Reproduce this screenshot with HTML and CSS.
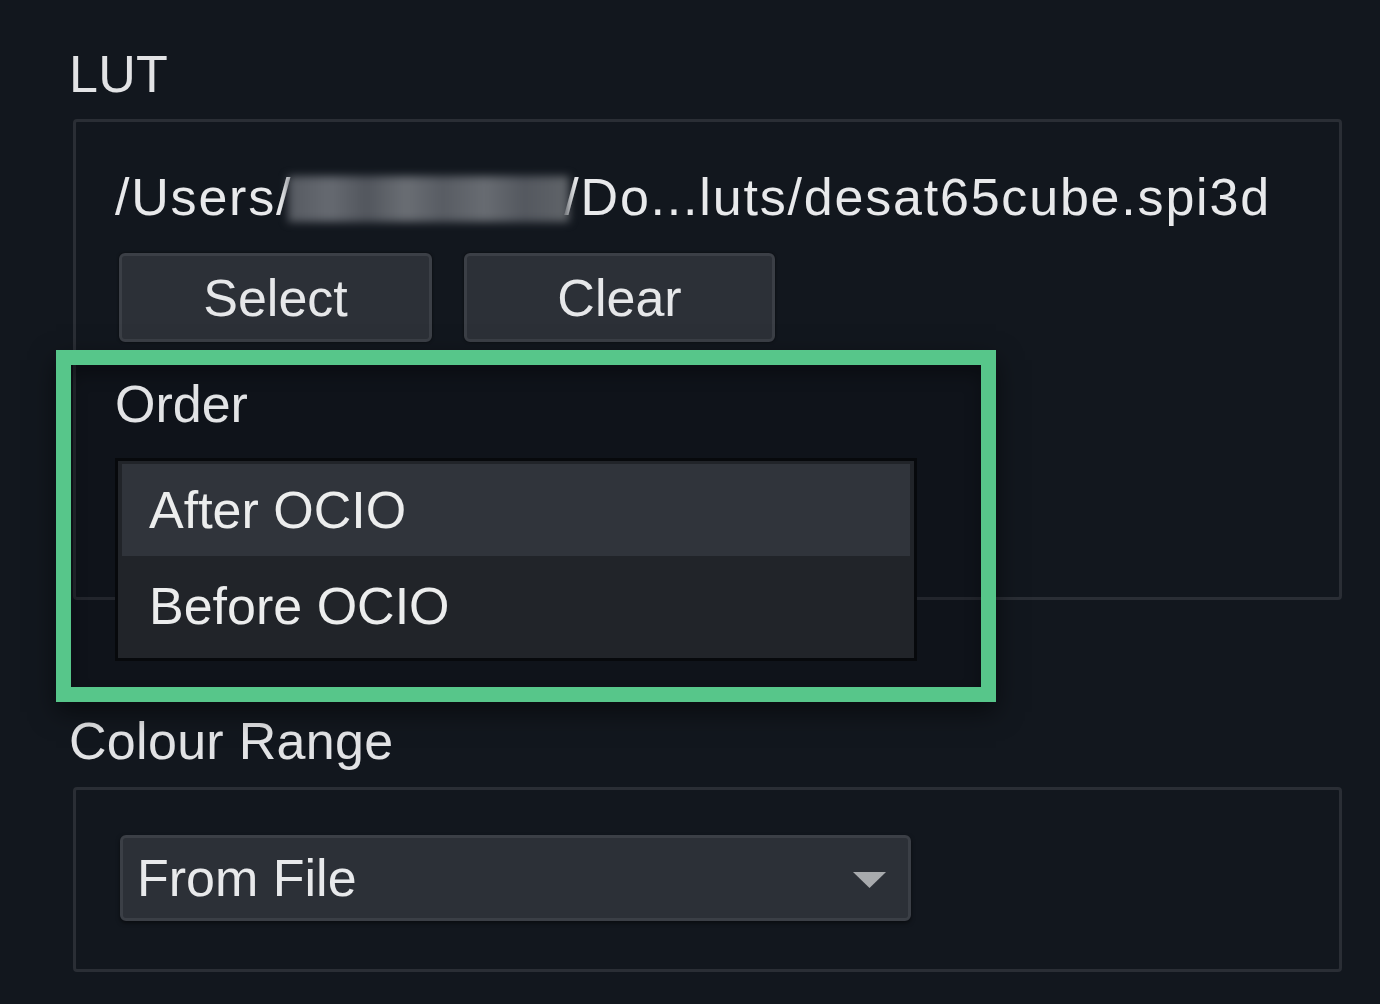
FILE: index.html
```html
<!DOCTYPE html>
<html lang="en">
<head>
<meta charset="utf-8">
<title>LUT settings</title>
<link rel="stylesheet" href="styles.css">
</head>
<body>
<div class="page">
  <div class="label">LUT</div>
  <div class="panel lut-panel">
    <div class="path">/Users/<span class="redacted"></span>/Do...luts/desat65cube.spi3d</div>
    <div class="buttons">
      <button class="btn btn-select">Select</button>
      <button class="btn btn-clear">Clear</button>
    </div>
  </div>

  <div class="label label-range">Colour Range</div>
  <div class="panel range-panel">
    <div class="combo">
      <span class="combo-text">From File</span>
      <svg class="combo-arrow" width="33" height="16" viewBox="0 0 33 16"><polygon points="0,0 33,0 16.5,16" fill="#a8aaad"/></svg>
    </div>
  </div>

  <div class="popup">
    <div class="popup-label">Order</div>
    <div class="list">
      <div class="item item-active">After OCIO</div>
      <div class="item item-second">Before OCIO</div>
    </div>
  </div>
</div>
</body>
</html>
```
FILE: styles.css
```css
html, body {
  margin: 0;
  padding: 0;
  background: #12171e;
}

body {
  font-family: "Liberation Sans", Arial, sans-serif;
  color: #e6e7e9;
  width: 1380px;
  height: 1004px;
  overflow: hidden;
}

.page {
  position: relative;
  padding: 44px 38px 0 66px;
}

.label {
  font-size: 52px;
  line-height: 60px;
  height: 60px;
  margin-left: 3px;
  letter-spacing: 0.3px;
  color: #e2e3e5;
}

.panel {
  margin-top: 15px;
  margin-left: 7px;
  border: 3px solid #2a2e35;
  border-radius: 4px;
  box-sizing: border-box;
}

.lut-panel {
  height: 481px;
  padding: 45px 0 0 39px;
}

.path {
  font-size: 52px;
  line-height: 60px;
  letter-spacing: 1.8px;
  white-space: nowrap;
  color: #e8e9eb;
  display: flex;
  align-items: center;
}

.redacted {
  display: inline-block;
  width: 281px;
  height: 46px;
  margin: 4px -5px 0 -4px;
  background: linear-gradient(90deg, #565a61 0%, #666a71 15%, #52565d 28%, #6a6e74 42%, #585c63 55%, #686c72 70%, #54585f 84%, #606469 100%);
  filter: blur(4px);
}

.buttons {
  display: flex;
  gap: 32px;
  margin: 26px 0 0 4px;
}

.btn {
  font-family: "Liberation Sans", Arial, sans-serif;
  font-size: 52px;
  color: #e6e7e9;
  background: #2c3037;
  border: 3px solid #3b3f46;
  border-radius: 6px;
  height: 89px;
  padding: 0;
  box-shadow: 0 0 3px rgba(0, 0, 0, 0.6);
}

.btn-select { width: 313px; }
.btn-clear { width: 311px; }

.label-range {
  margin-top: 111px;
}

.range-panel {
  margin-top: 16px;
  height: 185px;
  padding: 45px 0 0 44px;
}

.combo {
  width: 791px;
  height: 86px;
  box-sizing: border-box;
  background: #2c3037;
  border: 3px solid #3b3f46;
  border-radius: 6px;
  display: flex;
  align-items: center;
  justify-content: space-between;
  padding: 0 22px 0 14px;
  box-shadow: 0 2px 4px rgba(0, 0, 0, 0.5);
}

.combo-text {
  font-size: 52px;
  line-height: 60px;
  color: #e8e9eb;
}

.combo-arrow {
  display: block;
  margin-top: 4px;
}

.popup {
  position: absolute;
  left: 56px;
  top: 350px;
  width: 940px;
  height: 352px;
  box-sizing: border-box;
  border: 15px solid #57c68a;
  background: rgba(4, 6, 10, 0.2);
  box-shadow: 0 10px 24px rgba(0, 0, 0, 0.5), inset 0 10px 16px rgba(0, 0, 0, 0.3);
}

.popup-label {
  font-size: 52px;
  line-height: 60px;
  margin: 9px 0 0 44px;
  color: #e2e3e5;
}

.list {
  margin: 24px 0 0 44px;
  width: 802px;
  box-sizing: border-box;
  border: 3px solid #07090c;
  background: #212429;
  padding: 3px 4px 4px 4px;
}

.item {
  font-size: 52px;
  line-height: 93px;
  height: 94px;
  padding-left: 27px;
  color: #eceded;
}

.item-active {
  background: #30343b;
  height: 92px;
}

.item-second {
  height: 98px;
  line-height: 101px;
}
```
